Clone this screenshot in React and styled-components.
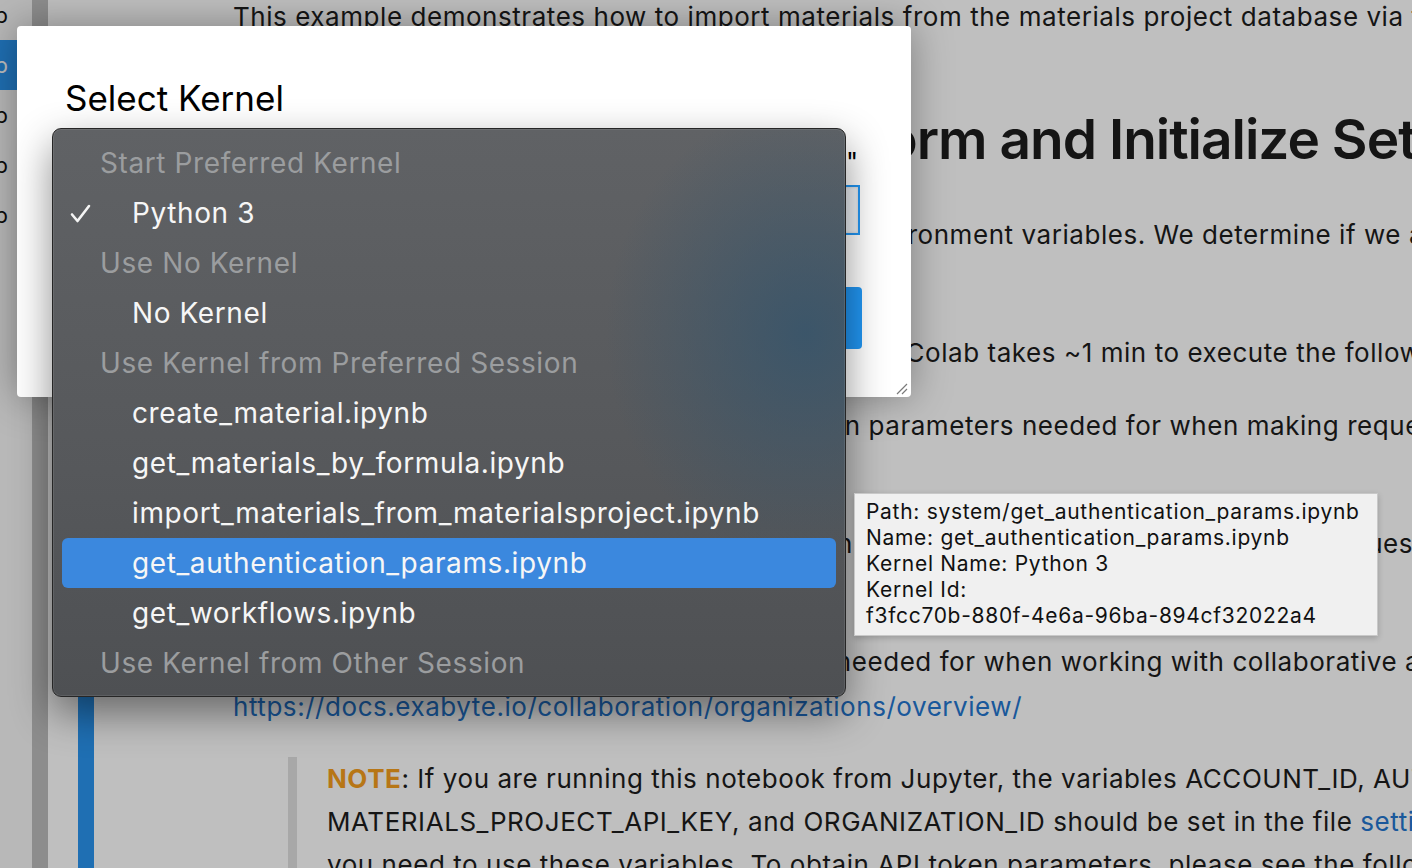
import React from "react";
import styled, { createGlobalStyle } from "styled-components";

const GlobalStyle = createGlobalStyle`
  html, body {
    margin: 0;
    padding: 0;
    height: 100%;
    overflow: hidden;
  }
  body {
    font-family: Inter, "Noto Sans", sans-serif;
    background: #fff;
  }
  #root {
    height: 100%;
  }
`;

const files = [
  "create_material.ipynb",
  "get_materials_by_formula.ipynb",
  "import_materials_from_materialsproject.ipynb",
  "get_authentication_params.ipynb",
  "get_workflows.ipynb",
];

const menu = [
  { label: "Start Preferred Kernel", header: true },
  { label: "Python 3", checked: true },
  { label: "Use No Kernel", header: true },
  { label: "No Kernel" },
  { label: "Use Kernel from Preferred Session", header: true },
  { label: "create_material.ipynb" },
  { label: "get_materials_by_formula.ipynb" },
  { label: "import_materials_from_materialsproject.ipynb" },
  { label: "get_authentication_params.ipynb", selected: true },
  { label: "get_workflows.ipynb" },
  { label: "Use Kernel from Other Session", header: true },
];

const tooltip = [
  "Path: system/get_authentication_params.ipynb",
  "Name: get_authentication_params.ipynb",
  "Kernel Name: Python 3",
  "Kernel Id:",
  "f3fcc70b-880f-4e6a-96ba-894cf32022a4",
];

export default function App() {
  return (
    <>
      <GlobalStyle />
      <Page>
        <Sidebar>
          <FileList>
            {files.map((f, i) => (
              <FileRow key={f} active={i === 1}>
                <span>{f}</span>
              </FileRow>
            ))}
          </FileList>
        </Sidebar>
        <Splitter />
        <Main>
          <Notebook>
            <Cell>
              <P>
                This example demonstrates how to import materials from the materials project database via the
                Exabyte.io REST API.
              </P>
            </Cell>
            <Cell active>
              <H1>Complete Authorization Form and Initialize Settings</H1>
              <P>
                We also set up the authorization header and the environment variables. We determine if we are using
                Jupyter Notebooks or Google
                <br />
                Colab to run this tutorial.
              </P>
              <P>
                If you are running this notebook from Google Colab, Colab takes ~1 min to execute the following cell.
              </P>
              <P>
                ACCOUNT_ID and AUTH_TOKEN - Authentication parameters needed for when making requests to Exabyte.io's
                API
                <br />
                Endpoints.
              </P>
              <P>
                MATERIALS_PROJECT_API_KEY - Authentication parameter needed for when making requests to Material
                Project's
                <br />
                API.
              </P>
              <P>
                ORGANIZATION_ID - Authentication parameter needed for when working with collaborative accounts
                <br />
                <Link>https://docs.exabyte.io/collaboration/organizations/overview/</Link>
              </P>
              <Quote>
                <Note>NOTE</Note>: If you are running this notebook from Jupyter, the variables ACCOUNT_ID, AUTH_TOKEN,
                <br />
                MATERIALS_PROJECT_API_KEY, and ORGANIZATION_ID should be set in the file <Link>settings.json</Link> if
                <br />
                you need to use these variables. To obtain API token parameters, please see the following link to the
              </Quote>
            </Cell>
          </Notebook>
        </Main>

        <Backdrop />

        <Dialog>
          <Title>Select Kernel</Title>
          <Label>Select kernel for: "get_authentication_params.ipynb"</Label>
          <SelectBox />
          <Buttons>
            <CancelButton>Cancel</CancelButton>
            <PrimaryButton>Select</PrimaryButton>
          </Buttons>
          <Resize viewBox="0 0 12 12">
            <path d="M1 11 L11 1 M6 11 L11 6" stroke="#7a7a7a" strokeWidth="1.2" />
          </Resize>
        </Dialog>

        <Menu>
          {menu.map((m) => (
            <MenuRow key={m.label} header={m.header} selected={m.selected}>
              {!m.header && (
                <CheckSlot>
                  {m.checked && (
                    <svg width="21" height="19" viewBox="0 0 21 19">
                      <path
                        d="M2 10.5 L7.5 17 L19 2"
                        fill="none"
                        stroke="#f4f4f4"
                        strokeWidth="2.6"
                        strokeLinecap="round"
                        strokeLinejoin="round"
                      />
                    </svg>
                  )}
                </CheckSlot>
              )}
              {m.label}
            </MenuRow>
          ))}
        </Menu>

        <Tooltip>
          {tooltip.map((t) => (
            <div key={t}>{t}</div>
          ))}
        </Tooltip>
      </Page>
    </>
  );
}

const Page = styled.div`
  position: relative;
  display: flex;
  width: 100vw;
  height: 100vh;
  overflow: hidden;
  background: #fff;
`;

const Sidebar = styled.div`
  width: 32px;
  flex-shrink: 0;
  background: #f6f6f6;
  overflow: hidden;
`;

const FileList = styled.div`
  margin-top: -10px;
`;

const FileRow = styled.div`
  height: 50px;
  display: flex;
  align-items: center;
  justify-content: flex-end;
  padding-right: 24px;
  font-size: 22px;
  color: ${(p) => (p.active ? "#fff" : "#111")};
  background: ${(p) => (p.active ? "#2a94ef" : "transparent")};
  white-space: nowrap;

  span {
    flex-shrink: 0;
  }
`;

const Splitter = styled.div`
  width: 16px;
  flex-shrink: 0;
  background: #bcbcbc;
`;

const Main = styled.main`
  flex: 1;
  min-width: 0;
  overflow: hidden;
  background: #fff;
  color: #1c1c1c;
`;

const Notebook = styled.div`
  margin-top: -6.5px;
  padding-left: 30px;
`;

const Cell = styled.div`
  border-left: 16px solid ${(p) => (p.active ? "#2a94ef" : "transparent")};
  padding-left: 139px;
  padding-bottom: 1px;
  white-space: nowrap;
`;

const P = styled.p`
  font-size: 26px;
  line-height: 45px;
  letter-spacing: 0.55px;
  margin: 0 0 28px;
`;

const H1 = styled.h1`
  font-size: 55px;
  line-height: 70px;
  font-weight: 600;
  letter-spacing: -1px;
  margin: 36px 0 38.5px;
`;

const Link = styled.span`
  color: #2376cf;
`;

const Quote = styled.blockquote`
  margin: 0 0 0 55px;
  border-left: 9px solid #e0e0e0;
  padding-left: 30px;
  font-size: 26px;
  line-height: 43px;
  letter-spacing: 0.55px;
`;

const Note = styled.b`
  color: #f59e1e;
  font-weight: 700;
`;

const Backdrop = styled.div`
  position: absolute;
  inset: 0;
  background: rgba(0, 0, 0, 0.25);
`;

const Dialog = styled.div`
  position: absolute;
  left: 17px;
  top: 26px;
  width: 894px;
  height: 371px;
  box-sizing: border-box;
  padding: 50px 49px 0 48px;
  background: #fff;
  border-radius: 4px;
  box-shadow: 0 0 40px rgba(0, 0, 0, 0.35);
`;

const Title = styled.h2`
  margin: 0;
  font-size: 35px;
  line-height: 44px;
  font-weight: 400;
  color: #000;
`;

const Label = styled.div`
  margin-top: 22px;
  padding-right: 4px;
  text-align: right;
  font-size: 26px;
  line-height: 40px;
  color: #000;
  white-space: nowrap;
`;

const SelectBox = styled.div`
  margin: 3px 2px 0 0;
  height: 50px;
  box-sizing: border-box;
  border: 2px solid #2196f3;
  background: #eef2f6;
  box-shadow: inset 0 0 3px rgba(0, 0, 0, 0.15);
`;

const Buttons = styled.div`
  margin-top: 52px;
  display: flex;
  justify-content: flex-end;
  gap: 16px;
`;

const CancelButton = styled.button`
  height: 62px;
  width: 180px;
  border: none;
  border-radius: 4px;
  background: #757575;
  color: #fff;
  font: 600 24px Inter, sans-serif;
`;

const PrimaryButton = styled(CancelButton)`
  background: #2196f3;
`;

const Resize = styled.svg`
  position: absolute;
  right: 3px;
  bottom: 2px;
  width: 12px;
  height: 12px;
`;

const Menu = styled.div`
  position: absolute;
  left: 52px;
  top: 128px;
  width: 794px;
  height: 569px;
  box-sizing: border-box;
  padding: 9px;
  border: 1px solid #262626;
  border-radius: 9px;
  background: radial-gradient(
      ellipse 200px 230px at 95% 36%,
      rgba(52, 84, 108, 0.8),
      rgba(52, 84, 108, 0) 100%
    ),
    linear-gradient(180deg, #606265 0%, #56585b 60%, #4e5053 100%);
  box-shadow: inset 0 0 0 1px rgba(255, 255, 255, 0.09), 0 16px 40px rgba(0, 0, 0, 0.45);
`;

const MenuRow = styled.div`
  height: 50px;
  display: flex;
  align-items: center;
  padding-left: ${(p) => (p.header ? "38px" : "8px")};
  border-radius: 6px;
  font-size: 28px;
  letter-spacing: 0.6px;
  white-space: nowrap;
  color: ${(p) => (p.header ? "#9b9d9f" : "#f6f6f6")};
  background: ${(p) => (p.selected ? "#3b88de" : "transparent")};
`;

const CheckSlot = styled.span`
  width: 62px;
  flex-shrink: 0;
  display: flex;
  align-items: center;
`;

const Tooltip = styled.div`
  position: absolute;
  left: 854px;
  top: 493px;
  width: 524px;
  box-sizing: border-box;
  padding: 5px 11px 6px;
  background: #f0f0f0;
  border: 1px solid #c8c8c8;
  box-shadow: 0 2px 6px rgba(0, 0, 0, 0.2);
  font-size: 21px;
  line-height: 26px;
  letter-spacing: 0.7px;
  color: #111;
  white-space: nowrap;
`;
